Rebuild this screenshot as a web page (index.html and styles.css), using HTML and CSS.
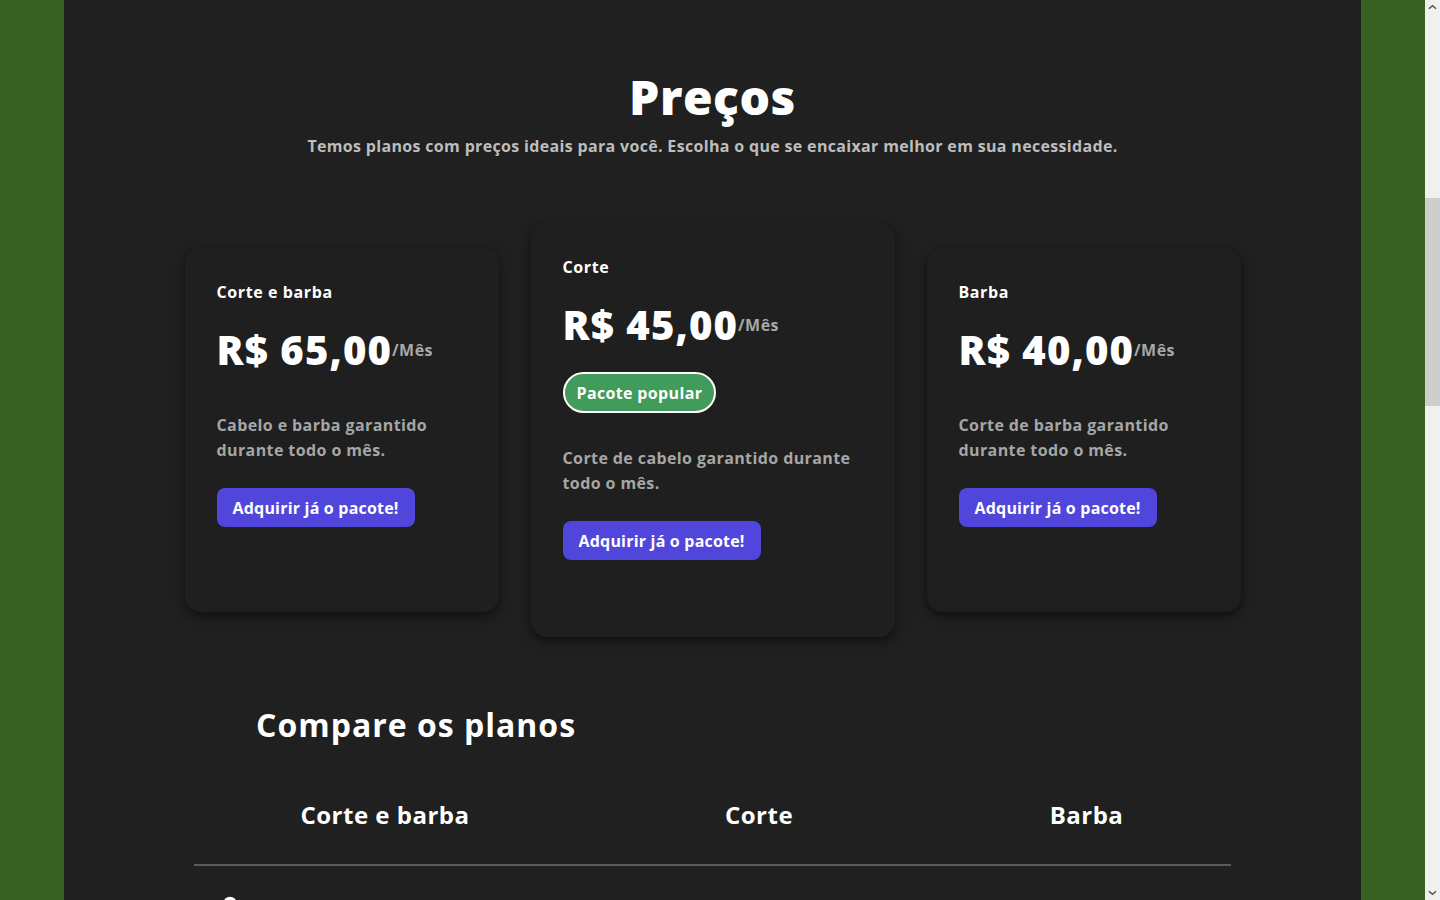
FILE: index.html
```html
<!DOCTYPE html>
<html lang="pt-BR">
<head>
<meta charset="utf-8">
<title>Preços</title>
<link rel="stylesheet" href="styles.css">
</head>
<body>
<main class="page">
  <section class="pricing">
    <h1 class="title">Preços</h1>
    <p class="subtitle">Temos planos com preços ideais para você. Escolha o que se encaixar melhor em sua necessidade.</p>

    <div class="cards">
      <article class="card">
        <h3 class="card-name">Corte e barba</h3>
        <p class="price">R$ 65,00<span class="per">/Mês</span></p>
        <p class="desc">Cabelo e barba garantido durante todo o mês.</p>
        <button class="buy">Adquirir já o pacote!</button>
      </article>
      <article class="card card-featured">
        <h3 class="card-name">Corte</h3>
        <p class="price">R$ 45,00<span class="per">/Mês</span></p>
        <span class="pill">Pacote popular</span>
        <p class="desc">Corte de cabelo garantido durante todo o mês.</p>
        <button class="buy">Adquirir já o pacote!</button>
      </article>
      <article class="card">
        <h3 class="card-name">Barba</h3>
        <p class="price">R$ 40,00<span class="per">/Mês</span></p>
        <p class="desc">Corte de barba garantido durante todo o mês.</p>
        <button class="buy">Adquirir já o pacote!</button>
      </article>
    </div>
  </section>

  <section class="compare">
    <h2 class="compare-title">Compare os planos</h2>
    <div class="table">
      <div class="thead">
        <div class="th">Corte e barba</div>
        <div class="th">Corte</div>
        <div class="th">Barba</div>
      </div>
      <div class="row">
        <div class="feature">
          <svg class="ico" viewBox="0 0 24 24" width="32" height="32"><circle cx="12" cy="7" r="5" fill="#fff"/><path d="M3 22c0-5 4-8 9-8s9 3 9 8z" fill="#fff"/></svg>
          <span>Corte de cabelo</span>
        </div>
        <div class="cell">✓</div>
        <div class="cell">✓</div>
        <div class="cell">—</div>
      </div>
      <div class="row">
        <div class="feature">
          <svg class="ico" viewBox="0 0 24 24" width="32" height="32"><circle cx="12" cy="7" r="5" fill="#fff"/><path d="M3 22c0-5 4-8 9-8s9 3 9 8z" fill="#fff"/></svg>
          <span>Barba</span>
        </div>
        <div class="cell">✓</div>
        <div class="cell">—</div>
        <div class="cell">✓</div>
      </div>
    </div>
  </section>
</main>

<div class="scrollbar" aria-hidden="true">
  <svg class="arrow arrow-up" viewBox="0 0 10 6" width="9" height="6"><path d="M1 5 5 1.5 9 5" fill="none" stroke="#505050" stroke-width="1.6"/></svg>
  <div class="thumb"></div>
  <svg class="arrow arrow-down" viewBox="0 0 10 6" width="9" height="6"><path d="M1 1 5 4.5 9 1" fill="none" stroke="#505050" stroke-width="1.6"/></svg>
</div>
</body>
</html>
```

FILE: styles.css
```css
body {
  margin: 0 15px 0 0;
  background: #376224;
  font-family: "Open Sans", "Noto Sans", sans-serif;
  color: #fff;
}
.page {
  width: 91%;
  margin: 0 auto;
  background: #202020;
  padding-top: 61px;
  padding-bottom: 120px;
}
.pricing {
  display: flex;
  flex-direction: column;
  align-items: center;
}
.title {
  margin: 0;
  font-size: 48px;
  line-height: 72px;
  font-weight: 800;
  letter-spacing: 0.5px;
}
.subtitle {
  margin: 1px 0 0;
  font-size: 16px;
  line-height: 24px;
  font-weight: 700;
  color: #bdbdbd;
  letter-spacing: 0.33px;
}
.cards {
  margin-top: 65px;
  display: flex;
  align-items: center;
  gap: 32px;
}
.card {
  width: 314px;
  box-sizing: border-box;
  background: #1f1f1f;
  border-radius: 16px;
  padding: 32px 32px 85px;
  box-shadow: 0 4px 12px rgba(0, 0, 0, 0.55);
  display: flex;
  flex-direction: column;
  align-items: flex-start;
}
.card-featured {
  width: 364px;
  padding-bottom: 77px;
}
.card-name {
  margin: 0;
  font-size: 16px;
  line-height: 24px;
  font-weight: 700;
  letter-spacing: 0.6px;
}
.price {
  margin: 16px 0 0;
  font-size: 40px;
  line-height: 60px;
  font-weight: 800;
  letter-spacing: 1.1px;
}
.per {
  font-size: 16px;
  font-weight: 700;
  color: #a8a8a8;
  vertical-align: 9px;
  letter-spacing: 0.5px;
}
.pill {
  margin-top: 17px;
  box-sizing: border-box;
  height: 41px;
  padding: 0 12px;
  display: inline-flex;
  align-items: center;
  background: #419c5c;
  border: 2px solid #fff;
  border-radius: 999px;
  font-size: 16px;
  font-weight: 700;
  letter-spacing: 0.35px;
}
.desc {
  margin: 33px 0 0;
  font-size: 16px;
  line-height: 25px;
  font-weight: 700;
  color: #a6a6a6;
  letter-spacing: 0.4px;
}
.buy {
  margin-top: 25px;
  height: 39px;
  padding: 0 16px;
  border: none;
  border-radius: 8px;
  background: #5046db;
  color: #fff;
  font-family: inherit;
  font-size: 16px;
  font-weight: 700;
  letter-spacing: 0.2px;
  cursor: pointer;
}
.compare {
  width: 1037px;
  margin: 64px auto 0;
}
.compare-title {
  margin: 0 0 0 62px;
  font-size: 32px;
  line-height: 48px;
  font-weight: 700;
  letter-spacing: 1px;
}
.table {
  margin-top: 48px;
}
.thead,
.row {
  display: grid;
  grid-template-columns: 382px 366px 1fr;
}
.row {
  grid-template-columns: 190px 190px 380px 1fr;
  align-items: center;
  padding: 28px 0;
  border-bottom: 1px solid #333;
}
.thead {
  border-bottom: 2px solid #5a5a5a;
  padding-bottom: 31px;
}
.th {
  text-align: center;
  font-size: 24px;
  line-height: 36px;
  font-weight: 700;
  letter-spacing: 0.5px;
}
.feature {
  display: flex;
  align-items: center;
  gap: 10px;
  padding-left: 20px;
  font-size: 16px;
  line-height: 20px;
  font-weight: 700;
}
.cell {
  text-align: center;
  font-size: 18px;
  line-height: 20px;
  font-weight: 700;
  color: #bdbdbd;
}
.scrollbar {
  position: fixed;
  top: 0;
  right: 0;
  width: 15px;
  height: 100vh;
  background: #f0f0f0;
}
.thumb {
  position: absolute;
  top: 198px;
  left: 0;
  width: 15px;
  height: 208px;
  background: #cdcdcd;
}
.arrow {
  position: absolute;
  left: 3px;
}
.arrow-up {
  top: 4px;
}
.arrow-down {
  bottom: 4px;
}
```
